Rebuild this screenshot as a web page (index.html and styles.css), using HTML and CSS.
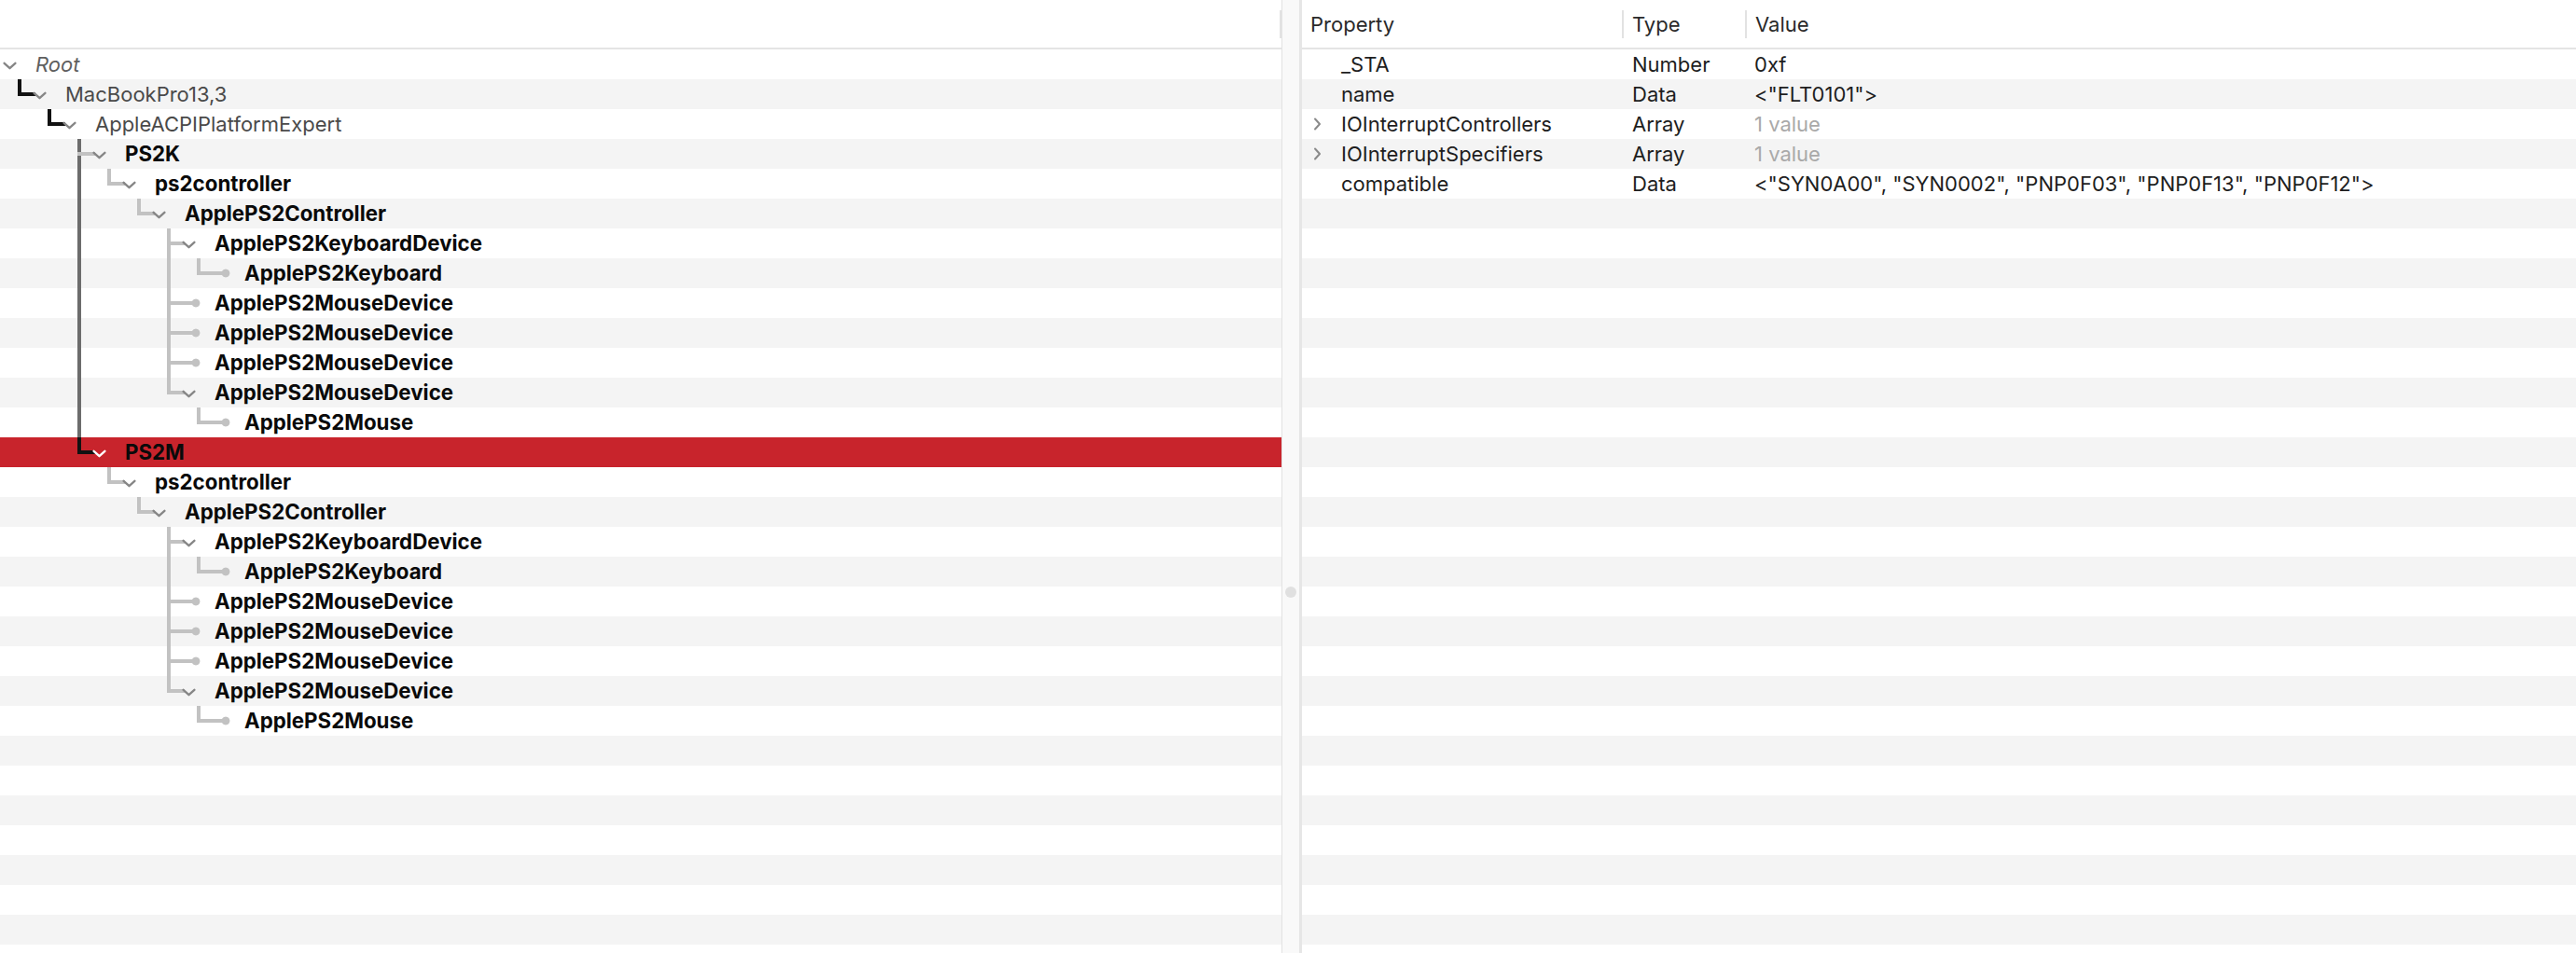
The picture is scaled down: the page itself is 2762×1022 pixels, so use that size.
FILE: index.html
```html
<!DOCTYPE html>
<html lang="en">
<head>
<meta charset="utf-8">
<title>IORegistry</title>
<link rel="stylesheet" href="styles.css">
</head>
<body>
<div class="window">
  <section class="tree-pane">
    <div class="pane-header"><span class="hsep"></span></div>
    <div class="rows">
      <div class="row"><span class="tg"><svg class="chev" viewBox="0 0 14 8"><path d="M1.5 1.5L7 6.5L12.5 1.5"/></svg></span><span class="label root">Root</span></div>
      <div class="row"><span class="cell elbow k"></span><span class="tg arm k"><svg class="chev" viewBox="0 0 14 8"><path d="M1.5 1.5L7 6.5L12.5 1.5"/></svg></span><span class="label reg">MacBookPro13,3</span></div>
      <div class="row"><span class="cell"></span><span class="cell elbow k"></span><span class="tg arm k"><svg class="chev" viewBox="0 0 14 8"><path d="M1.5 1.5L7 6.5L12.5 1.5"/></svg></span><span class="label reg">AppleACPIPlatformExpert</span></div>
      <div class="row"><span class="cell"></span><span class="cell"></span><span class="cell tee vd"></span><span class="tg arm"><svg class="chev" viewBox="0 0 14 8"><path d="M1.5 1.5L7 6.5L12.5 1.5"/></svg></span><span class="label b">PS2K</span></div>
      <div class="row"><span class="cell"></span><span class="cell"></span><span class="cell pipe vd"></span><span class="cell elbow"></span><span class="tg arm"><svg class="chev" viewBox="0 0 14 8"><path d="M1.5 1.5L7 6.5L12.5 1.5"/></svg></span><span class="label b">ps2controller</span></div>
      <div class="row"><span class="cell"></span><span class="cell"></span><span class="cell pipe vd"></span><span class="cell"></span><span class="cell elbow"></span><span class="tg arm"><svg class="chev" viewBox="0 0 14 8"><path d="M1.5 1.5L7 6.5L12.5 1.5"/></svg></span><span class="label b">ApplePS2Controller</span></div>
      <div class="row"><span class="cell"></span><span class="cell"></span><span class="cell pipe vd"></span><span class="cell"></span><span class="cell"></span><span class="cell tee"></span><span class="tg arm"><svg class="chev" viewBox="0 0 14 8"><path d="M1.5 1.5L7 6.5L12.5 1.5"/></svg></span><span class="label b">ApplePS2KeyboardDevice</span></div>
      <div class="row"><span class="cell"></span><span class="cell"></span><span class="cell pipe vd"></span><span class="cell"></span><span class="cell"></span><span class="cell pipe"></span><span class="cell elbow"></span><span class="tg leaf"></span><span class="label b">ApplePS2Keyboard</span></div>
      <div class="row"><span class="cell"></span><span class="cell"></span><span class="cell pipe vd"></span><span class="cell"></span><span class="cell"></span><span class="cell tee"></span><span class="tg leaf"></span><span class="label b">ApplePS2MouseDevice</span></div>
      <div class="row"><span class="cell"></span><span class="cell"></span><span class="cell pipe vd"></span><span class="cell"></span><span class="cell"></span><span class="cell tee"></span><span class="tg leaf"></span><span class="label b">ApplePS2MouseDevice</span></div>
      <div class="row"><span class="cell"></span><span class="cell"></span><span class="cell pipe vd"></span><span class="cell"></span><span class="cell"></span><span class="cell tee"></span><span class="tg leaf"></span><span class="label b">ApplePS2MouseDevice</span></div>
      <div class="row"><span class="cell"></span><span class="cell"></span><span class="cell pipe vd"></span><span class="cell"></span><span class="cell"></span><span class="cell elbow"></span><span class="tg arm"><svg class="chev" viewBox="0 0 14 8"><path d="M1.5 1.5L7 6.5L12.5 1.5"/></svg></span><span class="label b">ApplePS2MouseDevice</span></div>
      <div class="row"><span class="cell"></span><span class="cell"></span><span class="cell pipe vd"></span><span class="cell"></span><span class="cell"></span><span class="cell"></span><span class="cell elbow"></span><span class="tg leaf"></span><span class="label b">ApplePS2Mouse</span></div>
      <div class="row sel"><span class="cell"></span><span class="cell"></span><span class="cell elbow k"></span><span class="tg arm k"><svg class="chev white" viewBox="0 0 14 8"><path d="M1.5 1.5L7 6.5L12.5 1.5"/></svg></span><span class="label b">PS2M</span></div>
      <div class="row"><span class="cell"></span><span class="cell"></span><span class="cell"></span><span class="cell elbow"></span><span class="tg arm"><svg class="chev" viewBox="0 0 14 8"><path d="M1.5 1.5L7 6.5L12.5 1.5"/></svg></span><span class="label b">ps2controller</span></div>
      <div class="row"><span class="cell"></span><span class="cell"></span><span class="cell"></span><span class="cell"></span><span class="cell elbow"></span><span class="tg arm"><svg class="chev" viewBox="0 0 14 8"><path d="M1.5 1.5L7 6.5L12.5 1.5"/></svg></span><span class="label b">ApplePS2Controller</span></div>
      <div class="row"><span class="cell"></span><span class="cell"></span><span class="cell"></span><span class="cell"></span><span class="cell"></span><span class="cell tee"></span><span class="tg arm"><svg class="chev" viewBox="0 0 14 8"><path d="M1.5 1.5L7 6.5L12.5 1.5"/></svg></span><span class="label b">ApplePS2KeyboardDevice</span></div>
      <div class="row"><span class="cell"></span><span class="cell"></span><span class="cell"></span><span class="cell"></span><span class="cell"></span><span class="cell pipe"></span><span class="cell elbow"></span><span class="tg leaf"></span><span class="label b">ApplePS2Keyboard</span></div>
      <div class="row"><span class="cell"></span><span class="cell"></span><span class="cell"></span><span class="cell"></span><span class="cell"></span><span class="cell tee"></span><span class="tg leaf"></span><span class="label b">ApplePS2MouseDevice</span></div>
      <div class="row"><span class="cell"></span><span class="cell"></span><span class="cell"></span><span class="cell"></span><span class="cell"></span><span class="cell tee"></span><span class="tg leaf"></span><span class="label b">ApplePS2MouseDevice</span></div>
      <div class="row"><span class="cell"></span><span class="cell"></span><span class="cell"></span><span class="cell"></span><span class="cell"></span><span class="cell tee"></span><span class="tg leaf"></span><span class="label b">ApplePS2MouseDevice</span></div>
      <div class="row"><span class="cell"></span><span class="cell"></span><span class="cell"></span><span class="cell"></span><span class="cell"></span><span class="cell elbow"></span><span class="tg arm"><svg class="chev" viewBox="0 0 14 8"><path d="M1.5 1.5L7 6.5L12.5 1.5"/></svg></span><span class="label b">ApplePS2MouseDevice</span></div>
      <div class="row"><span class="cell"></span><span class="cell"></span><span class="cell"></span><span class="cell"></span><span class="cell"></span><span class="cell"></span><span class="cell elbow"></span><span class="tg leaf"></span><span class="label b">ApplePS2Mouse</span></div>
    </div>
  </section>
  <div class="divider"><span class="grip"></span></div>
  <section class="props-pane">
    <div class="pane-header props-grid">
      <div class="hcell">Property<span class="hsep"></span></div>
      <div class="hcell">Type<span class="hsep"></span></div>
      <div class="hcell">Value</div>
    </div>
    <div class="rows">
      <div class="prow props-grid"><div class="pname"><span class="disc"></span>_STA</div><div class="ptype">Number</div><div class="pval">0xf</div></div>
      <div class="prow props-grid"><div class="pname"><span class="disc"></span>name</div><div class="ptype">Data</div><div class="pval">&lt;"FLT0101"&gt;</div></div>
      <div class="prow props-grid"><div class="pname"><span class="disc"><svg class="rchev" viewBox="0 0 8 14"><path d="M1.5 1.5L6.5 7L1.5 12.5"/></svg></span>IOInterruptControllers</div><div class="ptype">Array</div><div class="pval dim">1 value</div></div>
      <div class="prow props-grid"><div class="pname"><span class="disc"><svg class="rchev" viewBox="0 0 8 14"><path d="M1.5 1.5L6.5 7L1.5 12.5"/></svg></span>IOInterruptSpecifiers</div><div class="ptype">Array</div><div class="pval dim">1 value</div></div>
      <div class="prow props-grid"><div class="pname"><span class="disc"></span>compatible</div><div class="ptype">Data</div><div class="pval">&lt;"SYN0A00", "SYN0002", "PNP0F03", "PNP0F13", "PNP0F12"&gt;</div></div>
    </div>
  </section>
</div>
</body>
</html>
```

FILE: styles.css
```css
html, body {
  margin: 0;
  padding: 0;
  background: #ffffff;
}

body {
  width: 2762px;
  height: 1022px;
  overflow: hidden;
  font-family: "Inter", "Noto Sans", "Liberation Sans", sans-serif;
  font-size: 22px;
  color: #1e1e1e;
}

.window {
  display: flex;
  width: 2762px;
  height: 1022px;
}

.tree-pane {
  width: 1374px;
  flex: none;
  display: flex;
  flex-direction: column;
}

.props-pane {
  flex: 1;
  display: flex;
  flex-direction: column;
  min-width: 0;
}

.pane-header {
  height: 51px;
  flex: none;
  border-bottom: 2px solid #e4e4e4;
  display: flex;
  align-items: center;
  justify-content: flex-end;
  background: #ffffff;
}

.hsep {
  width: 2px;
  height: 30px;
  background: #e2e2e2;
  flex: none;
}

.rows {
  flex: 1;
  background: repeating-linear-gradient(#ffffff 0 32px, #f4f4f4 32px 64px);
}

/* ---------- tree ---------- */
.row {
  height: 32px;
  display: flex;
  align-items: center;
  white-space: nowrap;
}

.row.sel {
  background: #c8242c;
}

.cell {
  width: 32px;
  height: 32px;
  flex: none;
  --v: #c2c2c2;
  --h: #c2c2c2;
}

.cell.pipe {
  background: linear-gradient(var(--v), var(--v)) 19px 0 / 4px 100% no-repeat;
}

.cell.tee {
  background:
    linear-gradient(var(--h), var(--h)) 19px 14px / 13px 4px no-repeat,
    linear-gradient(var(--v), var(--v)) 19px 0 / 4px 100% no-repeat;
}

.cell.elbow {
  background:
    linear-gradient(var(--h), var(--h)) 19px 14px / 13px 4px no-repeat,
    linear-gradient(var(--v), var(--v)) 19px 0 / 4px 18px no-repeat;
}

.cell.vd {
  --v: #6c6c6c;
}

.cell.k,
.tg.k {
  --v: #121212;
  --h: #121212;
}

.tg {
  width: 38px;
  height: 32px;
  flex: none;
  display: flex;
  align-items: center;
  --h: #c2c2c2;
}

.tg.arm {
  background: linear-gradient(var(--h), var(--h)) 0 14px / 6px 4px no-repeat;
}

.tg.leaf {
  background:
    radial-gradient(circle at 18px 16px, var(--h) 4px, rgba(194, 194, 194, 0) 4.8px),
    linear-gradient(var(--h), var(--h)) 0 14px / 16px 4px no-repeat;
}

.chev {
  width: 15px;
  height: 9px;
  margin-left: 3px;
  margin-top: 2px;
  fill: none;
  stroke: #868686;
  stroke-width: 2.2;
  stroke-linecap: round;
  stroke-linejoin: round;
}

.chev.white {
  stroke: #ffffff;
}

.label {
  line-height: 32px;
}

.label.root {
  font-style: italic;
  color: #5f5f5f;
}

.label.reg {
  color: #4a4a4a;
}

.label.b {
  font-weight: 700;
  font-size: 22.3px;
  color: #0a0a0a;
}

/* ---------- properties ---------- */
.props-grid {
  display: grid;
  grid-template-columns: 345px 132px 1fr;
}

.pane-header.props-grid {
  align-items: center;
}

.hcell {
  display: flex;
  align-items: center;
  justify-content: space-between;
  padding-left: 9px;
  color: #2a2a2a;
  height: 51px;
}

.prow {
  height: 32px;
  align-items: center;
  white-space: nowrap;
  color: #1e1e1e;
}

.pname {
  display: flex;
  align-items: center;
  padding-left: 12px;
}

.disc {
  width: 30px;
  height: 32px;
  flex: none;
  display: flex;
  align-items: center;
}

.rchev {
  width: 9px;
  height: 14px;
  fill: none;
  stroke: #8a8a8a;
  stroke-width: 2;
  stroke-linecap: round;
  stroke-linejoin: round;
}

.ptype {
  padding-left: 9px;
}

.pval {
  padding-left: 8px;
}

.pval.dim {
  color: #a9a9a9;
}

/* ---------- divider ---------- */
.divider {
  width: 18px;
  flex: none;
  background: #f9f9f9;
  border-left: 1px solid #e3e3e3;
  border-right: 3px solid #e6e6e6;
  display: flex;
  flex-direction: column;
  align-items: center;
}

.grip {
  width: 12px;
  height: 12px;
  border-radius: 50%;
  background: #e0e0e0;
  margin-top: 629px;
}
```
